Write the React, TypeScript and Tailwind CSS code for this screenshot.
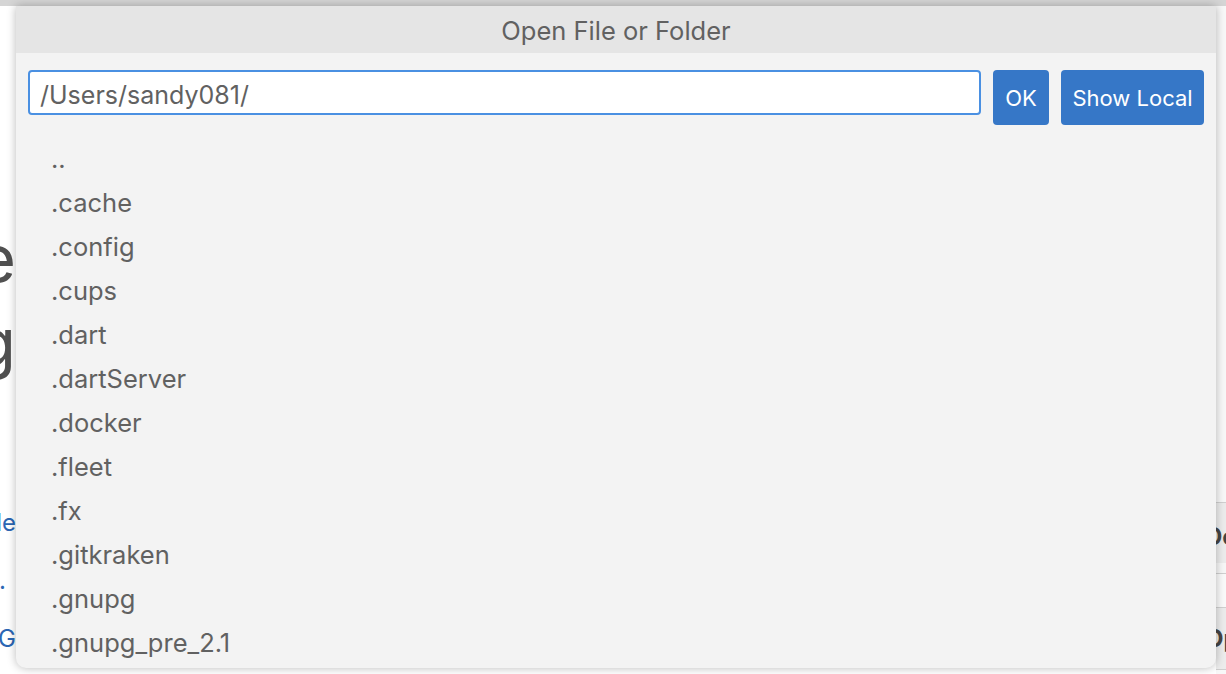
import React from 'react';

const entries = [
  '..',
  '.cache',
  '.config',
  '.cups',
  '.dart',
  '.dartServer',
  '.docker',
  '.fleet',
  '.fx',
  '.gitkraken',
  '.gnupg',
  '.gnupg_pre_2.1',
];

function Backdrop() {
  return (
    <div className="flex flex-col h-full">
      <div className="h-[6px] bg-[#d5d5d5]" />
      <div className="flex flex-1 bg-white">
        {/* welcome page, mostly hidden behind the dialog */}
        <div className="w-4 overflow-hidden flex flex-col text-[#505050]">
          <div className="h-[210px]" />
          <div className="flex justify-end whitespace-nowrap text-[66px] leading-[84px]">Code</div>
          <div className="flex justify-end whitespace-nowrap text-[66px] leading-[84px]">Editing</div>
          <div className="h-[124px]" />
          <div className="flex flex-col gap-[28px] text-[#2b66b3] text-[24px] leading-[30px]">
            <div className="flex justify-end whitespace-nowrap">New File</div>
            <div className="flex justify-end whitespace-nowrap pr-[10px]">Open.</div>
            <div className="flex justify-end whitespace-nowrap">Clone G</div>
          </div>
        </div>
        <div className="flex-1" />
        <div className="w-[10px] flex flex-col bg-[#f8f8f8]">
          <div className="h-[496px]" />
          <div className="h-[61px] border-t border-[#d0d0d0] bg-[#ececec] flex items-center overflow-hidden text-[24px] font-bold text-[#444] pt-[8px]">
            <span className="whitespace-nowrap -ml-[11px]">Do</span>
          </div>
          <div className="h-[10px] bg-[#f7f7f7]" />
          <div className="h-[34px] border-t border-[#d0d0d0] bg-[#fafafa]" />
          <div className="h-[62px] border-t border-[#d0d0d0] bg-[#ececec] flex items-center overflow-hidden text-[24px] font-bold text-[#444]">
            <span className="whitespace-nowrap -ml-[11px]">Op</span>
          </div>
          <div className="flex-1 border-t border-[#cfcfcf]" />
        </div>
      </div>
    </div>
  );
}

export default function App() {
  return (
    <div
      className="relative w-[1226px] h-[674px] overflow-hidden bg-white"
      style={{ fontFamily: 'Inter, "Noto Sans", "Liberation Sans", sans-serif' }}
    >
      <Backdrop />

      <div className="absolute left-[16px] top-[6px] w-[1200px] h-[662px] flex flex-col bg-[#f3f3f3] rounded-b-[10px] shadow-[0_0_10px_rgba(0,0,0,0.28)] overflow-hidden">
        <div className="h-[47px] shrink-0 bg-[#e5e5e5] flex items-center justify-center pt-[4px] text-[25.5px] text-[#616161]">
          Open File or Folder
        </div>

        <div className="flex items-start gap-[12px] px-[12px] pt-[17px]">
          <div className="flex-1 h-[45px] bg-white border-2 border-[#4a90e2] rounded-[4px] flex items-center pl-[10px] pt-[6px] text-[25px] text-[#616161]">
            /Users/sandy081/
          </div>
          <div className="flex gap-[12px]">
            <button className="h-[55px] w-[56px] bg-[#3677c7] rounded-[4px] text-white text-[22px] pt-[2px]">
              OK
            </button>
            <button className="h-[55px] w-[143px] bg-[#3677c7] rounded-[4px] text-white text-[22px] pt-[2px]">
              Show Local
            </button>
          </div>
        </div>

        <div className="flex flex-col pt-[12px]">
          {entries.map(name => (
            <div key={name} className="h-[44px] flex items-center pl-[35px] text-[25.5px] text-[#616161]">
              {name}
            </div>
          ))}
        </div>
      </div>
    </div>
  );
}
